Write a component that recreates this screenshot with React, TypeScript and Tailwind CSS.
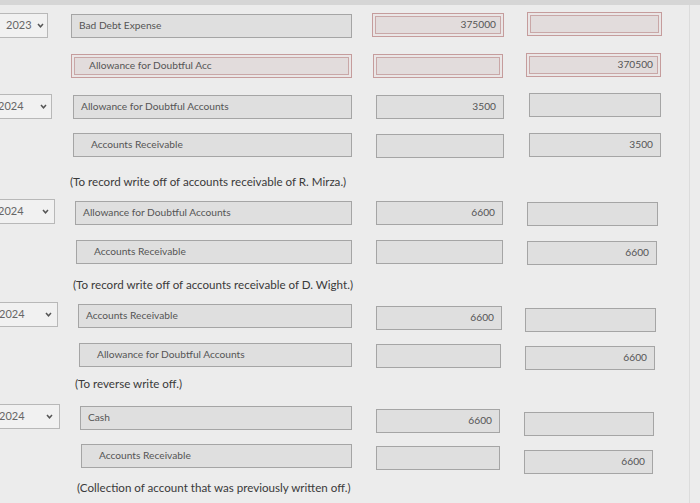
import React from "react";

type Row = {
  date?: string;
  dateCls?: string;
  account: string;
  indent?: boolean;
  accCls: string;
  debit?: string;
  debCls: string;
  credit?: string;
  credCls: string;
  red?: "both" | "all";
  rowCls: string;
};

type Note = { note: string; cls: string };

const entries: (Row | Note)[] = [
  {
    date: "2023",
    dateCls: "-ml-[3px] w-[51px] -mt-[1px] pl-[8px] pr-[3px]",
    account: "Bad Debt Expense",
    accCls: "ml-[23px] w-[281px]",
    debit: "375000",
    debCls: "ml-[20px] w-[132px] -mt-[1px]",
    credCls: "ml-[23px] w-[135px] -mt-[2px]",
    red: "both",
    rowCls: "mt-[9px]",
  },
  {
    account: "Allowance for Doubtful Acc",
    indent: true,
    accCls: "ml-[71px] w-[281px]",
    debCls: "ml-[21px] w-[130px]",
    credit: "370500",
    credCls: "ml-[23px] w-[135px] -mt-[1px]",
    red: "all",
    rowCls: "mt-[16px]",
  },
  {
    date: "2024",
    dateCls: "-ml-[11px] w-[63px] -mt-[1px] pl-[8px] pr-[4px]",
    account: "Allowance for Doubtful Accounts",
    accCls: "ml-[21px] w-[279px]",
    debit: "3500",
    debCls: "ml-[24px] w-[128px]",
    credCls: "ml-[25px] w-[132px] -mt-[2px]",
    rowCls: "mt-[17px]",
  },
  {
    account: "Accounts Receivable",
    indent: true,
    accCls: "ml-[73px] w-[279px]",
    debCls: "ml-[24px] w-[128px] mt-[1px]",
    credit: "3500",
    credCls: "ml-[25px] w-[132px]",
    rowCls: "mt-[14px]",
  },
  { note: "(To record write off of accounts receivable of R. Mirza.)", cls: "mt-[17px] ml-[70px]" },
  {
    date: "2024",
    dateCls: "-ml-[13px] w-[68px] -mt-[2px] pl-[10px] pr-[5px]",
    account: "Allowance for Doubtful Accounts",
    accCls: "ml-[20px] w-[277px]",
    debit: "6600",
    debCls: "ml-[24px] w-[127px]",
    credCls: "ml-[24px] w-[131px] mt-[1px]",
    rowCls: "mt-[11px]",
  },
  {
    account: "Accounts Receivable",
    indent: true,
    accCls: "ml-[76px] w-[276px]",
    debCls: "ml-[24px] w-[127px]",
    credit: "6600",
    credCls: "ml-[24px] w-[130px] mt-[1px]",
    rowCls: "mt-[15px]",
  },
  { note: "(To record write off of accounts receivable of D. Wight.)", cls: "mt-[13px] ml-[73px]" },
  {
    date: "2024",
    dateCls: "-ml-[12px] w-[70px] -mt-[2px] pl-[10px] pr-[5px]",
    account: "Accounts Receivable",
    accCls: "ml-[20px] w-[274px]",
    debit: "6600",
    debCls: "ml-[24px] w-[126px] mt-[2px]",
    credCls: "ml-[23px] w-[131px] mt-[4px]",
    rowCls: "mt-[11px]",
  },
  {
    account: "Allowance for Doubtful Accounts",
    indent: true,
    accCls: "ml-[79px] w-[273px]",
    debCls: "ml-[24px] w-[125px] mt-[1px]",
    credit: "6600",
    credCls: "ml-[24px] w-[130px] mt-[3px]",
    rowCls: "mt-[15px]",
  },
  { note: "(To reverse write off.)", cls: "mt-[9px] ml-[75px]" },
  {
    date: "2024",
    dateCls: "-ml-[12px] w-[72px] -mt-[2px] pl-[10px] pr-[6px]",
    account: "Cash",
    accCls: "ml-[20px] w-[272px]",
    debit: "6600",
    debCls: "ml-[24px] w-[124px] mt-[3px]",
    credCls: "ml-[24px] w-[130px] mt-[6px]",
    rowCls: "mt-[14px]",
  },
  {
    account: "Accounts Receivable",
    indent: true,
    accCls: "ml-[81px] w-[271px]",
    debCls: "ml-[24px] w-[124px] mt-[2px]",
    credit: "6600",
    credCls: "ml-[24px] w-[129px] mt-[6px]",
    rowCls: "mt-[14px]",
  },
  { note: "(Collection of account that was previously written off.)", cls: "mt-[12px] ml-[77px]" },
];

const greyBox = "bg-[#dfdfdf] border border-[#a5a5a5]";
const redBox =
  "bg-[#e2dcdc] border border-[#c59c9c] shadow-[inset_0_0_0_2px_#eae6e6,inset_0_0_0_3px_#c9a7a7]";

function Chevron() {
  return (
    <svg width="7" height="5" viewBox="0 0 7 5" className="shrink-0">
      <path d="M1 1 L3.5 3.8 L6 1" fill="none" stroke="#555" strokeWidth="1.5" />
    </svg>
  );
}

function EntryRow({ r }: { r: Row }) {
  const accRed = r.red === "all";
  const numRed = !!r.red;
  return (
    <div className={`flex items-start h-[24px] ${r.rowCls}`}>
      {r.date && (
        <div
          className={`h-[25px] shrink-0 flex items-center justify-between bg-[#f1f1f1] border border-[#b8b8b8] text-[11px] text-[#666] ${r.dateCls}`}
        >
          <span>{r.date}</span>
          <Chevron />
        </div>
      )}
      <div
        className={`h-[24px] shrink-0 flex items-center text-[10.2px] text-[#555] ${accRed ? redBox : greyBox} ${
          r.indent ? "pl-[17px]" : "pl-[7px]"
        } ${r.accCls}`}
      >
        {r.account}
      </div>
      <div
        className={`h-[24px] shrink-0 flex items-center justify-end pr-[7px] text-[10.2px] text-[#555] ${
          numRed ? redBox : greyBox
        } ${r.debCls}`}
      >
        {r.debit}
      </div>
      <div
        className={`h-[24px] shrink-0 flex items-center justify-end pr-[7px] text-[10.2px] text-[#555] ${
          numRed ? redBox : greyBox
        } ${r.credCls}`}
      >
        {r.credit}
      </div>
    </div>
  );
}

export default function App() {
  return (
    <div className="w-[700px] h-[503px] overflow-hidden bg-[#ececec] font-['Lato','Open_Sans',sans-serif]">
      <div className="h-[5px] bg-[#d6d6d6]" />
      <div className="w-[690px] h-[498px] border-r border-[#dcdcdc] flex flex-col">
        {entries.map((e, i) =>
          "note" in e ? (
            <div key={i} className={`h-[16px] leading-[16px] text-[11.6px] text-[#3a3a3a] whitespace-nowrap ${e.cls}`}>
              {e.note}
            </div>
          ) : (
            <EntryRow key={i} r={e} />
          )
        )}
      </div>
    </div>
  );
}
